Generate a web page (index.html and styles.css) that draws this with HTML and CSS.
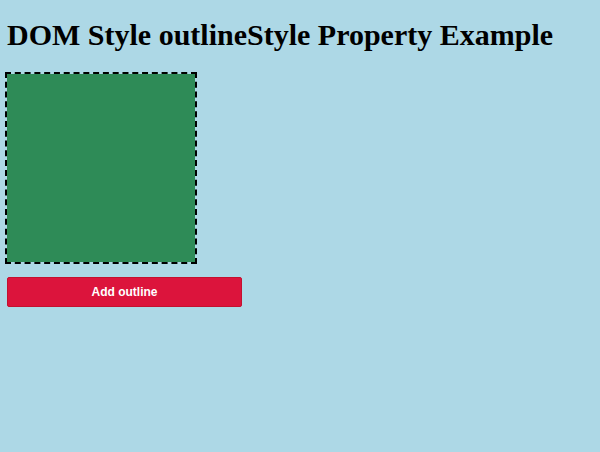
FILE: index.html
```html
<!DOCTYPE html>
<html>
<head>
<meta charset="utf-8">
<link rel="stylesheet" href="styles.css">
</head>
<body>
<h1 class="title">DOM Style outlineStyle Property Example</h1>
<div class="box"></div>
<button class="btn">Add outline</button>
</body>
</html>
```
FILE: styles.css
```css
html, body {
  margin: 0;
  padding: 0;
}
body {
  background: #add8e6;
  padding: 0 7px;
  font-family: "Liberation Serif", "Times New Roman", serif;
}
.title {
  font-size: 30px;
  font-weight: bold;
  margin: 0;
  padding-top: 16px;
  line-height: 37px;
  height: 37px;
  color: #000;
}
.box {
  width: 188px;
  height: 188px;
  background: #2e8b57;
  outline: 2px dashed #000;
  margin-top: 21px;
}
.btn {
  display: block;
  margin-top: 15px;
  width: 235px;
  height: 30px;
  background: #dc143c;
  border: 1px solid #c4112f;
  border-radius: 2px;
  color: #fff;
  font-family: "Liberation Sans", Arial, sans-serif;
  font-weight: bold;
  font-size: 12px;
  padding: 0;
}
```
